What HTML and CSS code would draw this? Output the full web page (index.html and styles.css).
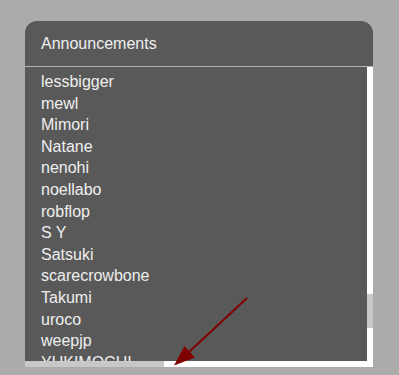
FILE: index.html
```html
<!DOCTYPE html>
<html>
<head>
<meta charset="utf-8">
<link rel="stylesheet" href="styles.css">
</head>
<body>
<div class="card">
  <div class="header">Announcements</div>
  <div class="body">
    <ul class="list">
      <li>lessbigger</li>
      <li>mewl</li>
      <li>Mimori</li>
      <li>Natane</li>
      <li>nenohi</li>
      <li>noellabo</li>
      <li>robflop</li>
      <li>S Y</li>
      <li>Satsuki</li>
      <li>scarecrowbone</li>
      <li>Takumi</li>
      <li>uroco</li>
      <li>weepjp</li>
      <li>YUKIMOCHI</li>
    </ul>
    <div class="vtrack"><div class="vthumb"></div></div>
    <div class="htrack"><div class="hthumb"></div></div>
    <div class="corner"></div>
  </div>
</div>
<svg class="arrow" width="399" height="375" viewBox="0 0 399 375">
  <line x1="247" y1="298" x2="189" y2="352" stroke="#800000" stroke-width="2"/>
  <polygon points="174,365.5 184.5,346 195,357.5" fill="#800000"/>
</svg>
</body>
</html>
```
FILE: styles.css
```css
html, body {
  margin: 0;
  padding: 0;
}
body {
  background: #ababab;
  width: 399px;
  height: 375px;
  overflow: hidden;
  position: relative;
  font-family: "Liberation Sans", Arial, sans-serif;
}
.card {
  margin: 21px 0 0 25px;
  width: 348px;
  background: #595959;
  border-radius: 12px 12px 0 0;
  overflow: hidden;
}
.header {
  height: 45px;
  box-sizing: border-box;
  padding: 0 16px;
  display: flex;
  align-items: center;
  color: #efefef;
  font-size: 16px;
  border-bottom: 1px solid #b3b3b3;
  height: 46px;
}
.body {
  display: grid;
  grid-template-columns: 342px 6px;
  grid-template-rows: 294px 6px;
}
.list {
  margin: 0;
  padding: 4px 16px 0;
  list-style: none;
  overflow: hidden;
  color: #efefef;
  font-size: 16px;
  line-height: 21.6px;
  white-space: nowrap;
  border-bottom-left-radius: 4px;
}
.vtrack {
  background: #ffffff;
  padding-top: 227px;
}
.vthumb {
  height: 34px;
  background: #c8c8c8;
}
.htrack {
  background: #ffffff;
}
.hthumb {
  width: 139px;
  height: 6px;
  background: #c8c8c8;
}
.corner {
  background: #ffffff;
}
.arrow {
  position: absolute;
  left: 0;
  top: 0;
  pointer-events: none;
}
```
